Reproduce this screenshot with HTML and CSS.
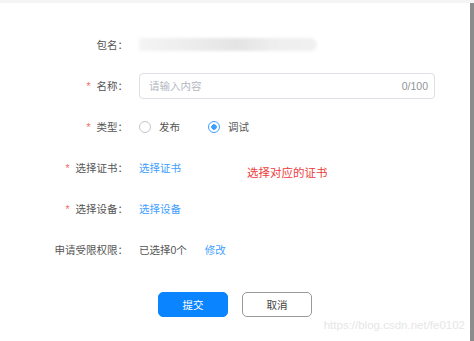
FILE: index.html
```html
<!DOCTYPE html>
<html lang="zh-CN">
<head>
    <meta charset="UTF-8">
    <title>上传应用</title>
    <link rel="stylesheet" href="styles.css">
</head>
<body>
    <div class="page">
        <div class="panel">
            <form class="form">
                <div class="row">
                    <label class="label">包名：</label>
                    <div class="field"><div class="blurred"></div></div>
                </div>
                <div class="row">
                    <label class="label"><span class="star">*</span>名称：</label>
                    <div class="field">
                        <div class="input">
                            <span class="placeholder">请输入内容</span>
                            <span class="count">0/100</span>
                        </div>
                    </div>
                </div>
                <div class="row">
                    <label class="label"><span class="star">*</span>类型：</label>
                    <div class="field">
                        <span class="radio"><span class="radio-dot"></span>发布</span>
                        <span class="radio checked"><span class="radio-dot"></span>调试</span>
                    </div>
                </div>
                <div class="row">
                    <label class="label"><span class="star">*</span>选择证书：</label>
                    <div class="field"><a class="link">选择证书</a></div>
                </div>
                <div class="row">
                    <label class="label"><span class="star">*</span>选择设备：</label>
                    <div class="field"><a class="link">选择设备</a></div>
                </div>
                <div class="row">
                    <label class="label">申请受限权限：</label>
                    <div class="field"><span class="text">已选择0个</span><a class="link">修改</a></div>
                </div>
            </form>
            <div class="actions">
                <button class="btn btn-primary">提交</button>
                <button class="btn">取消</button>
            </div>
            <!-- 标注 -->
            <div class="note">选择对应的证书</div>
            <div class="watermark">https://blog.csdn.net/fe0102</div>
        </div>
        <div class="scrollbar"></div>
    </div>
</body>
</html>
```

FILE: styles.css
```css
body {
    margin: 0;
    background-color: #fff;
    font-family: "Liberation Sans", "Noto Sans CJK SC", sans-serif;
    font-size: 10.5px;
    color: #555;
}
.page {
    display: flex;
    height: 341px;
    border-top: 3px solid #f4f4f4;
    box-sizing: border-box;
}
.panel {
    position: relative;
    flex-grow: 1;
    padding-top: 21px;
}
.scrollbar {
    width: 4px;
    background-color: #8c8c8c;
}
.row {
    display: flex;
    align-items: center;
    height: 41px;
}
.label {
    width: 128px;
    text-align: right;
    color: #555;
}
.star {
    color: #f56c6c;
    margin-right: 6px;
}
.field {
    display: flex;
    align-items: center;
    margin-left: 11px;
}
.blurred {
    width: 178px;
    height: 13px;
    border-radius: 2px 8px 8px 2px;
    background: linear-gradient(90deg, #f4f4f4 0%, #ececec 30%, #e4e4e4 55%, #eeeeee 75%, #f0f0f0 100%);
    filter: blur(1.5px);
}
.input {
    display: flex;
    justify-content: space-between;
    align-items: center;
    width: 296px;
    height: 26px;
    box-sizing: border-box;
    padding: 0 6px 0 9px;
    border: 1px solid #dcdfe6;
    border-radius: 4px;
}
.placeholder {
    color: #b4b8bf;
}
.count {
    color: #909399;
}
.radio {
    display: flex;
    align-items: center;
    color: #555;
    margin-right: 28px;
}
.radio-dot {
    width: 12px;
    height: 12px;
    box-sizing: border-box;
    border: 1px solid #c4c6cc;
    border-radius: 50%;
    margin-right: 8px;
}
.radio.checked .radio-dot {
    border-color: #409eff;
    background: radial-gradient(circle, #409eff 0, #409eff 2.5px, #fff 3px);
}
.link {
    color: #409eff;
    cursor: pointer;
}
.text {
    color: #555;
    margin-right: 18px;
}
.actions {
    display: flex;
    justify-content: center;
    margin-top: 22px;
}
.btn {
    width: 70px;
    height: 25px;
    margin: 0 7px;
    border: 1px solid #999;
    border-radius: 5px;
    background-color: #fff;
    color: #444;
    font-family: inherit;
    font-size: 10.5px;
    cursor: pointer;
}
.btn-primary {
    border-color: #0a84ff;
    background-color: #0a84ff;
    color: #fff;
}
.note {
    position: absolute;
    left: 247px;
    top: 161px;
    color: #ee3b3b;
    font-size: 11.5px;
}
.watermark {
    position: absolute;
    right: 5px;
    bottom: 10px;
    color: #e6e6e6;
    font-size: 11.5px;
}
```
